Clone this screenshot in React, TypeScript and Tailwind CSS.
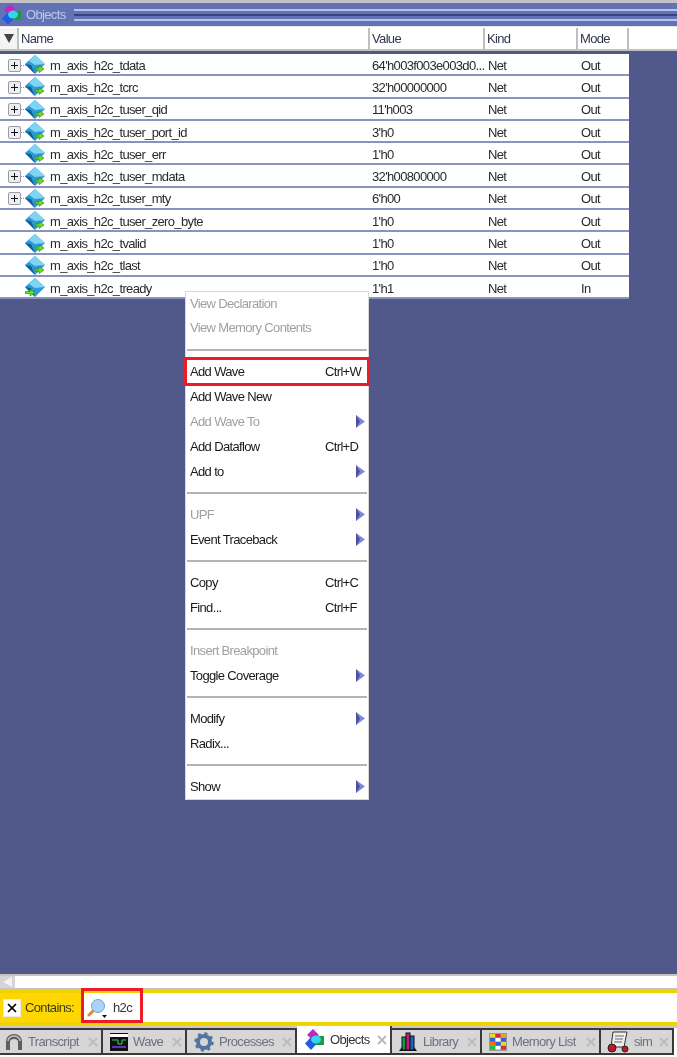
import { X } from "lucide-react";

const rows = [
  { name: "m_axis_h2c_tdata", value: "64'h003f003e003d0...", mode: "Out", plus: true },
  { name: "m_axis_h2c_tcrc", value: "32'h00000000", mode: "Out", plus: true },
  { name: "m_axis_h2c_tuser_qid", value: "11'h003", mode: "Out", plus: true },
  { name: "m_axis_h2c_tuser_port_id", value: "3'h0", mode: "Out", plus: true },
  { name: "m_axis_h2c_tuser_err", value: "1'h0", mode: "Out", plus: false },
  { name: "m_axis_h2c_tuser_mdata", value: "32'h00800000", mode: "Out", plus: true },
  { name: "m_axis_h2c_tuser_mty", value: "6'h00", mode: "Out", plus: true },
  { name: "m_axis_h2c_tuser_zero_byte", value: "1'h0", mode: "Out", plus: false },
  { name: "m_axis_h2c_tvalid", value: "1'h0", mode: "Out", plus: false },
  { name: "m_axis_h2c_tlast", value: "1'h0", mode: "Out", plus: false },
  { name: "m_axis_h2c_tready", value: "1'h1", mode: "In", plus: false },
];

function ObjectsIcon({ className = "" }: { className?: string }) {
  return (
    <svg width="21" height="22" viewBox="0 0 21 22" className={`shrink-0 ${className}`}>
      <path d="M9 0 L15 6 L9 11 L3 6 Z" fill="#c026c0" />
      <rect x="12" y="7" width="8" height="9" fill="#1f9a3c" />
      <path d="M7 8 L13 14.5 L7 21 L1 14.5 Z" fill="#1f5fe0" />
      <ellipse cx="12" cy="10.5" rx="5" ry="4" fill="#30d8e8" />
    </svg>
  );
}

function SignalIcon({ input }: { input: boolean }) {
  return (
    <svg width="20" height="20" viewBox="0 0 20 20" className="-ml-px shrink-0">
      <path d="M10 0 L20 9 L10 19 L0 9 Z" fill="#2f9ad8" />
      <path d="M10 0 L20 9 L10 10 L4 6 Z" fill="#7fd4f4" />
      <path d="M10 19 L0 9 L6 10 Z" fill="#0f5f98" />
      {input ? (
        <path d="M0 13.5 H5 V11 L10 14.5 L5 18 V15.5 H0 Z" fill="#64e01c" stroke="#2c7a10" strokeWidth="0.6" />
      ) : (
        <path d="M10 13 H14 V10.5 L19 14 L14 17.5 V15 H10 Z" fill="#64e01c" stroke="#2c7a10" strokeWidth="0.6" />
      )}
    </svg>
  );
}

function PlusBox() {
  return (
    <div className="flex h-[13px] w-[13px] items-center justify-center rounded-[2px] border border-[#9a9aa8] bg-[#eeeef2]">
      <svg width="7" height="7" viewBox="0 0 7 7">
        <path d="M0 3.5 H7 M3.5 0 V7" stroke="#111" strokeWidth="1" />
      </svg>
    </div>
  );
}

function Arrow() {
  return (
    <svg width="11" height="13" viewBox="0 0 11 13" className="absolute right-[2px] top-[6px]">
      <path d="M1 0 L10 6.5 L1 13 Z" fill="#8088d8" />
      <path d="M1 0 L1 13 L5 6.5 Z" fill="#4c5299" />
    </svg>
  );
}

function MenuItem({ label, shortcut, off, arrow, boxed, short }: { label: string; shortcut?: string; off?: boolean; arrow?: boolean; boxed?: boolean; short?: boolean }) {
  return (
    <div
      className={`relative flex items-center pl-[4px] ${short ? "h-[23px]" : "h-[25px]"} ${off ? "text-[#a0a0a0]" : "text-[#1a1a1a]"} ${boxed ? "outline-[3px] -outline-offset-1 outline-[#ed1c24]" : ""}`}
    >
      <span>{label}</span>
      {shortcut && <span className="absolute left-[139px]">{shortcut}</span>}
      {arrow && <Arrow />}
    </div>
  );
}

function Sep({ first }: { first?: boolean }) {
  return <div className={`mx-px h-[2px] bg-[#b4b4b4] ${first ? "my-[8.5px]" : "my-[8px]"}`} />;
}

function Tab({ label, icon, active, width }: { label: string; icon: React.ReactNode; active?: boolean; width: string }) {
  return (
    <div
      className={`flex items-center border-r-2 border-b-2 border-[#3a3a3a] pl-[5px] ${width} ${active ? "-mt-[2px] h-[29px] bg-white text-[#333]" : "h-[27px] border-t-2 bg-[#d6d6d6] text-[#6e7080]"}`}
    >
      {icon}
      <span className="ml-[5px] whitespace-nowrap">{label}</span>
      <X size={14} strokeWidth={3.5} className="ml-auto mr-[1px] text-[#bcbcbc]" />
    </div>
  );
}

export default function App() {
  return (
    <div className="relative flex h-[1057px] w-[677px] flex-col overflow-hidden bg-[#50598a] font-['Liberation_Sans',sans-serif] text-[13px] leading-none tracking-[-0.65px] blur-[0.35px]">
      <div className="h-[3px] bg-[#c4c4c4]" />
      {/* title bar */}
      <div className="flex h-[23px] items-center bg-[#6272b4] pl-[1px]">
        <ObjectsIcon />
        <span className="ml-[4px] text-[#c0c8e8]">Objects</span>
        <div className="ml-[8px] flex h-[12px] flex-1 flex-col justify-between">
          <div className="h-[2px] bg-[#b8c2ea]" />
          <div className="h-[2px] bg-[#3a4580]" />
          <div className="h-[2px] bg-[#b8c2ea]" />
        </div>
      </div>
      {/* column headers */}
      <div className="flex h-[25px] items-stretch border-t border-[#e8e8e8] bg-white pt-[1px] text-[#30364e]">
        <div className="flex w-[19px] items-center justify-center border-r-2 border-b-2 border-[#c0c0c0] bg-[#f4f4f4]">
          <svg width="10" height="9" viewBox="0 0 10 9">
            <path d="M0 0 H10 L5 9 Z" fill="#444" />
          </svg>
        </div>
        <div className="flex w-[351px] items-center border-r-2 border-b-2 border-[#c0c0c0] pl-[2px]">Name</div>
        <div className="flex w-[115px] items-center border-r-2 border-b-2 border-[#c0c0c0] pl-[2px]">Value</div>
        <div className="flex w-[93px] items-center border-r-2 border-b-2 border-[#c0c0c0] pl-[2px]">Kind</div>
        <div className="flex w-[51px] items-center border-r-2 border-b-2 border-[#c0c0c0] pl-[2px]">Mode</div>
        <div className="flex-1 border-b-2 border-[#c0c0c0]" />
      </div>
      <div className="h-[3px] bg-[#50598a]" />
      {/* table */}
      <div className="flex-1">
        {rows.map((r) => (
          <div key={r.name} className="flex h-[22.3px] w-[629px] items-center border-b-2 border-[#8a92c0] bg-white pt-[2px] text-[#2a2a2a]">
            <div className="flex w-[370px] items-center pl-[8px]">
              <div className="flex w-[18px] items-center">
                {r.plus && <PlusBox />}
                {r.plus && <div className="w-[5px] border-t border-dotted border-[#9a9a9a]" />}
              </div>
              <SignalIcon input={r.mode === "In"} />
              <span className="ml-[5px]">{r.name}</span>
            </div>
            <div className="w-[115px] whitespace-nowrap pl-[2px]">{r.value}</div>
            <div className="w-[93px] pl-[3px]">Net</div>
            <div className="pl-[3px]">{r.mode}</div>
          </div>
        ))}
      </div>
      {/* scrollbar */}
      <div className="flex h-[16px] items-stretch border-y-2 border-[#c4c4c4] bg-white">
        <div className="flex w-[15px] items-center justify-center bg-[#d4d4d4]">
          <svg width="9" height="10" viewBox="0 0 9 10">
            <path d="M9 0 V10 L0 5 Z" fill="#f2f2f2" />
          </svg>
        </div>
      </div>
      {/* contains filter */}
      <div className="flex h-[35px] items-stretch border-t-[3px] border-b-[3px] border-[#f5d000] bg-[#ffd700]">
        <div className="flex w-[81px] items-center pl-[3px] text-[#3c3c18]">
          <div className="flex h-[18px] w-[18px] items-center justify-center border border-[#e8e8e8] bg-white">
            <X size={14} strokeWidth={3} className="text-black" />
          </div>
          <span className="ml-[4px]">Contains:</span>
        </div>
        <div className="flex flex-1 items-center bg-white pl-[6px] text-[#333]">
          <svg width="20" height="20" viewBox="0 0 20 20">
            <path d="M2 17 L7 12" stroke="#e8863a" strokeWidth="3" strokeLinecap="round" />
            <circle cx="11" cy="8" r="6.5" fill="#a8d4f8" stroke="#6fa4d8" />
            <path d="M15 17 H20 L17.5 20 Z" fill="#111" />
          </svg>
          <span className="ml-[6px]">h2c</span>
        </div>
        <div className="pointer-events-none absolute left-[81px] top-[988px] h-[35px] w-[62px] border-[3px] border-[#ed1c24]" />
      </div>
      {/* tabs */}
      <div className="flex h-[32px] items-start border-t-[3px] border-[#c8c8c8] bg-white">
        <Tab
          width="w-[103px]"
          label="Transcript"
          icon={
            <svg width="18" height="18" viewBox="0 0 18 18" className="shrink-0">
              <path d="M1 17 V8 A8 7 0 0 1 17 8 V17 H13 V9 A4 3 0 0 0 5 9 V17 Z" fill="#5e5e5e" />
              <path d="M3 8 A6 5 0 0 1 15 8" fill="none" stroke="#c8c8c8" strokeWidth="1.5" />
            </svg>
          }
        />
        <Tab
          width="w-[84px]"
          label="Wave"
          icon={
            <svg width="18" height="18" viewBox="0 0 18 18" className="ml-[2px] shrink-0">
              <rect x="0" y="0" width="18" height="18" fill="#111" />
              <rect x="0" y="1" width="18" height="3" fill="#fff" />
              <path d="M2 7 H8 V11 H12 V7 H16" stroke="#2ddc5a" fill="none" />
              <path d="M2 14 H16" stroke="#6030c0" strokeWidth="2" />
            </svg>
          }
        />
        <Tab
          width="w-[110px]"
          label="Processes"
          icon={
            <svg width="20" height="20" viewBox="0 0 20 20" className="ml-[2px] shrink-0">
              <circle cx="10" cy="10" r="6" fill="none" stroke="#52759c" strokeWidth="4" />
              <circle cx="10" cy="10" r="8.5" fill="none" stroke="#52759c" strokeWidth="2.5" strokeDasharray="3 3.7" />
            </svg>
          }
        />
        <Tab width="w-[95px]" label="Objects" active icon={<ObjectsIcon className="ml-[2px]" />} />
        <Tab
          width="w-[90px]"
          label="Library"
          icon={
            <svg width="20" height="20" viewBox="0 0 20 20" className="ml-[1px] shrink-0">
              <path d="M1 19 L4 15 H16 L19 19 Z" fill="#111" />
              <rect x="4" y="5" width="4" height="13" fill="#109a50" stroke="#111" />
              <rect x="8" y="1" width="4" height="17" fill="#d0187a" stroke="#111" />
              <rect x="12" y="4" width="4" height="14" fill="#1a60c8" stroke="#111" />
            </svg>
          }
        />
        <Tab
          width="w-[119px]"
          label="Memory List"
          icon={
            <svg width="18" height="18" viewBox="0 0 18 18" className="ml-[2px] shrink-0">
              <rect width="18" height="18" fill="#999" />
              <rect x="1" y="1" width="5" height="3.5" fill="#e8d820" />
              <rect x="6.5" y="1" width="5" height="3.5" fill="#d03030" />
              <rect x="12" y="1" width="5" height="3.5" fill="#f0a020" />
              <rect x="1" y="5" width="5" height="3.5" fill="#3060e0" />
              <rect x="6.5" y="5" width="5" height="3.5" fill="#fff" />
              <rect x="12" y="5" width="5" height="3.5" fill="#3060e0" />
              <rect x="1" y="9" width="5" height="3.5" fill="#f07020" />
              <rect x="6.5" y="9" width="5" height="3.5" fill="#3060e0" />
              <rect x="12" y="9" width="5" height="3.5" fill="#e8d820" />
              <rect x="1" y="13" width="5" height="3.5" fill="#20c040" />
              <rect x="6.5" y="13" width="5" height="3.5" fill="#fff" />
              <rect x="12" y="13" width="5" height="3.5" fill="#d03030" />
            </svg>
          }
        />
        <Tab
          width="w-[73px]"
          label="sim"
          icon={
            <svg width="22" height="22" viewBox="0 0 22 22" className="ml-[1px] shrink-0">
              <path d="M6 1 H20 L17 16 H4 Z" fill="#eee" stroke="#333" />
              <path d="M8 5 H17 M8 8 H16 M7 11 H15" stroke="#667" />
              <circle cx="5" cy="17" r="4" fill="#c01828" stroke="#222" />
              <circle cx="18" cy="18" r="3" fill="#c01828" stroke="#222" />
            </svg>
          }
        />
      </div>

      {/* context menu */}
      <div className="absolute left-[185px] top-[291px] w-[184px] border border-[#d8d8d8] bg-white">
        <MenuItem label="View Declaration" off short />
        <MenuItem label="View Memory Contents" off />
        <Sep first />
        <MenuItem label="Add Wave" shortcut="Ctrl+W" boxed />
        <MenuItem label="Add Wave New" />
        <MenuItem label="Add Wave To" off arrow />
        <MenuItem label="Add Dataflow" shortcut="Ctrl+D" />
        <MenuItem label="Add to" arrow />
        <Sep />
        <MenuItem label="UPF" off arrow />
        <MenuItem label="Event Traceback" arrow />
        <Sep />
        <MenuItem label="Copy" shortcut="Ctrl+C" />
        <MenuItem label="Find..." shortcut="Ctrl+F" />
        <Sep />
        <MenuItem label="Insert Breakpoint" off />
        <MenuItem label="Toggle Coverage" arrow />
        <Sep />
        <MenuItem label="Modify" arrow />
        <MenuItem label="Radix..." />
        <Sep />
        <MenuItem label="Show" arrow />
      </div>
    </div>
  );
}
